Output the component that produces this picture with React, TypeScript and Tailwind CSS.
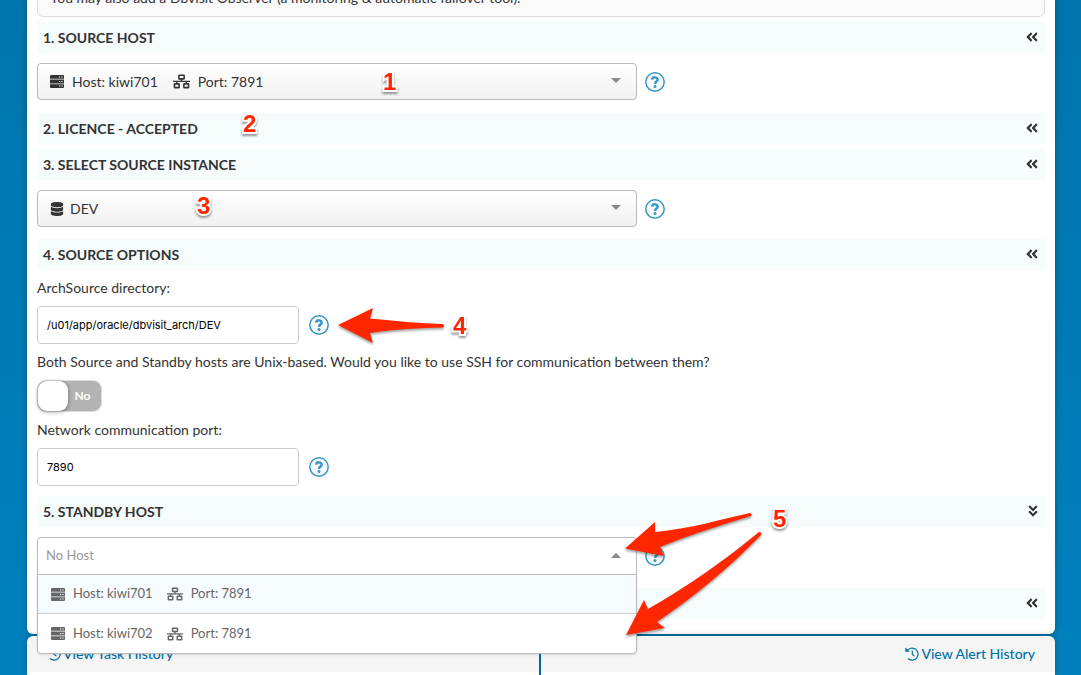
import { useState, type ReactNode } from 'react';
import { FaAngleDoubleDown, FaAngleDoubleLeft, FaDatabase } from 'react-icons/fa';

const ServerIcon = ({ className = '' }: { className?: string }) => (
  <svg viewBox="0 0 14 13" className={className} fill="currentColor" aria-hidden="true">
    <path
      fillRule="evenodd"
      d="M1 0h12a1 1 0 0 1 1 1v2.8H0V1a1 1 0 0 1 1-1zM0 4.6h14v3.8H0zM0 9.200h14V12a1 1 0 0 1-1 1H1a1 1 0 0 1-1-1zM9 1.400v1.200h1.200V1.400zM11.400 1.400v1.200h1.200V1.400zM9 5.900v1.200h1.200V5.900zM11.400 5.900v1.200h1.200V5.900zM9 10.400v1.200h1.200v-1.200zM11.400 10.400v1.200h1.200v-1.200z"
    />
  </svg>
);

const NetworkIcon = ({ className = '' }: { className?: string }) => (
  <svg viewBox="0 0 18 15" className={className} fill="none" stroke="currentColor" strokeWidth="1.7" aria-hidden="true">
    <rect x="6.2" y="0.9" width="5.6" height="3.8" rx="0.5" />
    <rect x="1.5" y="10" width="5" height="4" rx="0.5" />
    <rect x="11.5" y="10" width="5" height="4" rx="0.5" />
    <path d="M9 4.700v2.600M0 7.300h18M4 7.300v2.700M14 7.300v2.700" strokeWidth="1.4" />
  </svg>
);

const HistoryIcon = () => (
  <svg viewBox="0 0 14 14" className="size-3.5" fill="none" stroke="currentColor" strokeWidth="1.2" aria-hidden="true">
    <path d="M1.800 4.200A6 6 0 1 1 3 11.500" />
    <path d="M0.400 0.400v4.400h4.400z" fill="currentColor" stroke="none" />
    <path d="M7.300 3.600v3.800l2.200 1.700" />
  </svg>
);

const Help = ({ label }: { label: string }) => (
  <button type="button" aria-label={label} className="size-5 shrink-0 rounded-full text-[#3498c8]">
    <svg viewBox="0 0 20 20" className="size-5" fill="none" stroke="currentColor" aria-hidden="true">
      <circle cx="10" cy="10" r="9.200" fill="#fafafa" strokeWidth="1.500" />
      <path d="M7.200 7.700C7.500 4.500 12.700 4.700 12.600 7.700 12.500 9.600 10.100 9.500 10 11.900" strokeWidth="2.500" />
      <circle cx="10" cy="14.500" r="1.500" fill="currentColor" stroke="none" />
    </svg>
  </button>
);

const SectionBar = ({ title, open = false }: { title?: string; open?: boolean }) => (
  <button
    type="button"
    aria-label={title ?? 'Next step'}
    aria-expanded={open}
    className="flex h-[31px] w-full items-center justify-between bg-[#f6fbfc] px-1.5 text-left text-sm font-bold"
  >
    <span>{title}</span>
    <span className="pb-0.5">
      {open ? <FaAngleDoubleDown className="h-3.5 w-3" /> : <FaAngleDoubleLeft className="size-3.5" />}
    </span>
  </button>
);

type HostPortProps = { host: string; port: string; compact?: boolean };

const HostPort = ({ host, port, compact = false }: HostPortProps) => (
  <>
    <ServerIcon className="h-[13px] w-3.5" />
    <span className="ml-2">Host: {host}</span>
    <NetworkIcon className={compact ? 'ml-3.5 h-3.5 w-4' : 'ml-[15px] h-[15px] w-[17px]'} />
    <span className="ml-2">Port: {port}</span>
  </>
);

const Caret = ({ up = false }: { up?: boolean }) => (
  <svg viewBox="0 0 10 5" className="mb-0.5 ml-auto h-[5px] w-2.5 shrink-0" fill="#8a8a8a" aria-hidden="true">
    <path d={up ? 'M0 5 5 0l5 5z' : 'M0 0h10L5 5z'} />
  </svg>
);

type SelectProps = { label: string; value: string; children: ReactNode };

// the native select lies over the drawn value, which carries icons
const RichSelect = ({ label, value, children }: SelectProps) => (
  <div className="flex items-center gap-2">
    <div className="relative flex h-[37px] w-full max-w-[600px] items-center rounded border border-[#b9b9b9] bg-linear-to-b from-white to-[#f1f1f1] pr-[15px] pl-3 text-sm">
      {children}
      <Caret />
      <select aria-label={label} defaultValue={value} className="absolute inset-0 w-full cursor-pointer opacity-0">
        <option>{value}</option>
      </select>
    </div>
    <Help label={`About ${label}`} />
  </div>
);

const Field = ({ id, label, value }: { id: string; label: string; value: string }) => (
  <div>
    <label htmlFor={id} className="block text-sm leading-5">
      {label}
    </label>
    <div className="mt-2 flex items-center gap-2.5">
      <input
        id={id}
        defaultValue={value}
        className="h-[38px] w-[262px] rounded border border-[#ccc] bg-white px-[9px] font-[Inter,sans-serif] text-[11px] text-black"
      />
      <Help label={`About ${label}`} />
    </div>
  </div>
);

const hosts = [
  { host: 'kiwi701', port: '7891' },
  { host: 'kiwi702', port: '7891' },
];

const StandbyHost = () => {
  const [active, setActive] = useState(0);

  return (
    <div className="flex items-center gap-2">
      <div className="relative w-full max-w-[600px]">
        <div className="flex h-[38px] items-center rounded-t border border-[#b9b9b9] bg-white pr-[15px]">
          <input
            role="combobox"
            aria-label="Standby host"
            aria-expanded="true"
            aria-controls="standby-hosts"
            placeholder="No Host"
            className="w-full px-2 text-[13px] outline-none placeholder:text-[#999]"
          />
          <Caret up />
        </div>
        <ul
          id="standby-hosts"
          role="listbox"
          className="absolute inset-x-0 top-[37px] z-10 rounded-b border border-[#b9b9b9] bg-white text-[13px] text-[#666] shadow"
        >
          {hosts.map((h, i) => (
            <li
              key={h.host}
              role="option"
              aria-selected={i === active}
              onMouseEnter={() => setActive(i)}
              className={`flex h-[39px] items-center px-[13px] not-last:border-b not-last:border-[#ccc] ${i === active ? 'bg-[#f5fbfe]' : ''}`}
            >
              <HostPort host={h.host} port={h.port} compact />
            </li>
          ))}
        </ul>
      </div>
      <Help label="About standby host" />
    </div>
  );
};

const marks = [
  { n: 1, pos: 'left-[383px] top-[68px]' },
  { n: 2, pos: 'left-[243px] top-[110px]' },
  { n: 3, pos: 'left-[197px] top-[192px]' },
  { n: 4, pos: 'left-[453px] top-[312px]' },
  { n: 5, pos: 'left-[773px] top-[505px]' },
];

const Annotations = () => (
  <div className="pointer-events-none absolute top-0 left-0 z-20">
    <svg width="800" height="660" fill="#ff2600" className="drop-shadow-[0_2px_1px_rgba(0,0,0,0.35)]" aria-hidden="true">
      <path d="M338 325 373 308 370 318.500C395 321 420 323.500 443 324Q445 326 443 327.500C420 328 395 329 370 333L373 343Z" />
      <path d="M625 548.500 655 522 655 532C690 529 722 519 750 513Q752.500 514 751 516C720 525 690 535 660 547L664 556Z" />
      <path d="M626 635 644 600 648 609C690 585 725 560 759 532Q762 532 761 535C730 567 695 596 657 622L665 628Z" />
    </svg>
    {marks.map((m) => (
      <span
        key={m.n}
        className={`absolute ${m.pos} font-['Liberation_Sans',Arial,sans-serif] text-2xl leading-7 font-bold text-[#ff2600] drop-shadow-[0_2px_1px_rgba(0,0,0,0.4)] [-webkit-text-stroke:4px_white] [paint-order:stroke]`}
      >
        {m.n}
      </span>
    ))}
  </div>
);

export default function App() {
  const [ssh, setSsh] = useState(false);

  return (
    <div className="relative flex min-h-screen flex-col overflow-hidden bg-linear-to-b from-[#0075ad] to-[#0081be] pr-[26px] pl-[27px] font-[Lato,sans-serif] text-[#333]">
      <main className="rounded-b-md bg-white px-2.5 pb-[15px] shadow-[0_0_6px_rgba(0,0,0,0.3)]">
        <p className="-mt-[21px] mb-[5px] rounded-md border border-[#ddd] bg-[#fafafa] px-3 py-2 text-sm leading-5">
          You may also add a Dbvisit Observer (a monitoring &amp; automatic failover tool).
        </p>

        <SectionBar title="1. SOURCE HOST" />
        <div className="mt-2.5 mb-[13px]">
          <RichSelect label="Source host" value="Host: kiwi701 Port: 7891">
            <HostPort host="kiwi701" port="7891" />
          </RichSelect>
        </div>

        <SectionBar title="2. LICENCE - ACCEPTED" />
        <div className="h-[5px]" />
        <SectionBar title="3. SELECT SOURCE INSTANCE" />
        <div className="mt-2.5 mb-3">
          <RichSelect label="Source instance" value="DEV">
            <FaDatabase className="h-3.5 w-3.5" />
            <span className="ml-1.5">DEV</span>
          </RichSelect>
        </div>

        <SectionBar title="4. SOURCE OPTIONS" />
        <div className="mt-2 mb-2.5 flex flex-col gap-2">
          <Field id="arch-source" label="ArchSource directory:" value="/u01/app/oracle/dbvisit_arch/DEV" />
          <div>
            <label htmlFor="use-ssh" className="block text-sm leading-5">
              Both Source and Standby hosts are Unix-based. Would you like to use SSH for communication between them?
            </label>
            <div className="relative mt-2 flex h-8 w-[65px] items-center rounded-[9px] border border-[#ddd] bg-[#b3b3b3] font-bold text-white">
              <span
                className={`h-[30px] w-[30px] rounded-[9px] bg-white shadow-[0_1px_4px_rgba(0,0,0,0.4)] ${ssh ? 'order-last' : ''}`}
              />
              <span className="flex-1 pr-1 text-center text-xs">{ssh ? 'Yes' : 'No'}</span>
              <input
                id="use-ssh"
                type="checkbox"
                role="switch"
                checked={ssh}
                onChange={(e) => setSsh(e.target.checked)}
                className="absolute inset-0 cursor-pointer opacity-0"
              />
            </div>
          </div>
          <Field id="network-port" label="Network communication port:" value="7890" />
        </div>

        <SectionBar title="5. STANDBY HOST" open />
        <div className="mt-2.5 mb-[13px]">
          <StandbyHost />
        </div>

        <SectionBar />
      </main>

      <footer className="mt-0.5 flex flex-1 flex-col rounded-t-md bg-[#f5f5f5] text-sm font-medium text-[#0072a6] shadow-[0_0_6px_rgba(0,0,0,0.3)]">
        <div className="grid h-9 grid-cols-2 divide-x-2 divide-[#006a9b]">
          <div className="flex items-center px-5">
            <a href="#tasks" className="flex items-center gap-0.5">
              <HistoryIcon />
              View Task History
            </a>
          </div>
          <div className="flex items-center justify-end px-5">
            <a href="#alerts" className="flex items-center gap-0.5">
              <HistoryIcon />
              View Alert History
            </a>
          </div>
        </div>
        <div className="grid flex-1 grid-cols-2 divide-x-2 divide-[#006a9b] bg-white">
          <div />
          <div />
        </div>
      </footer>

      <Annotations />
    </div>
  );
}
